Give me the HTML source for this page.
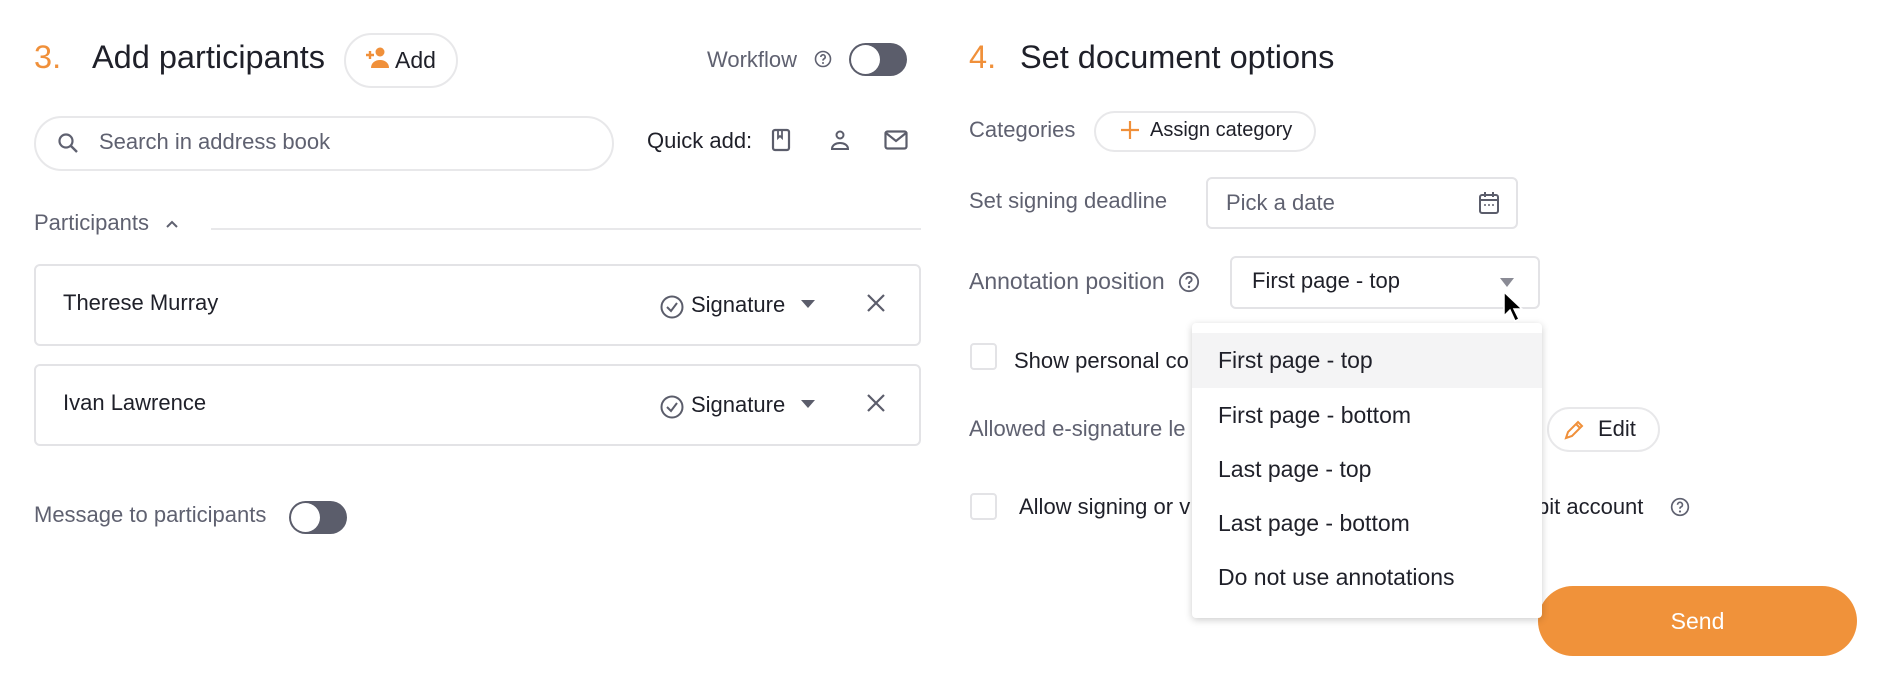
<!DOCTYPE html>
<html><head><meta charset="utf-8"><style>
*{box-sizing:border-box;margin:0;padding:0}
body{width:1888px;height:699px;background:#fff;font-family:"Liberation Sans",Arial,sans-serif;position:relative;overflow:hidden;color:#1f2029}
.a{position:absolute;white-space:nowrap}
.h{font-size:32.5px;color:#1f2029}
.num{color:#f0903a}
.lbl{font-size:22px;color:#5f6170}
.t{font-size:22px;color:#1f2029}
.pill{position:absolute;border:2px solid #e8e8ea;border-radius:30px;background:#fff}
.box{position:absolute;border:2px solid #e3e3e6;border-radius:6px;background:#fff}
.tog{position:absolute;background:#5b5d6b;border-radius:20px}
.tog::after{content:"";position:absolute;left:2px;top:2px;bottom:2px;aspect-ratio:1;border-radius:50%;background:#fff}
.cb{position:absolute;width:27px;height:27px;border:2px solid #e3e3e6;border-radius:4px;background:#fff}
.dd{font-size:23px}
</style></head><body>

<div class="a h" style="left:34px;top:39px"><span class="num">3.</span></div>
<div class="a h" style="left:92px;top:39px">Add participants</div>
<div class="pill" style="left:344px;top:33px;width:114px;height:55px"></div>
<svg class="a" style="left:364px;top:47px" width="26" height="22" viewBox="0 0 26 22"><path d="M2 8h8M6 4v8" stroke="#f0903a" stroke-width="2.4"/><circle cx="16" cy="5" r="4.5" fill="#f0903a"/><path d="M7 21c0-5 4-8 9-8s9 3 9 8z" fill="#f0903a"/></svg>
<div class="a t" style="left:395px;top:47px;font-size:23px">Add</div>

<div class="a lbl" style="left:707px;top:47px">Workflow</div>
<svg class="a" style="left:814px;top:50px" width="18" height="18" viewBox="0 0 18 18"><circle cx="9" cy="9" r="7.5" fill="none" stroke="#5f6170" stroke-width="1.6"/><path d="M6.8 7a2.2 2.2 0 1 1 3 2c-.7.3-.8.8-.8 1.6" fill="none" stroke="#5f6170" stroke-width="1.6"/><circle cx="9" cy="13" r="1" fill="#5f6170"/></svg>
<div class="tog" style="left:849px;top:43px;width:58px;height:33px"></div>

<div class="pill" style="left:34px;top:116px;width:580px;height:55px"></div>
<svg class="a" style="left:56px;top:131px" width="24" height="24" viewBox="0 0 24 24"><circle cx="10" cy="10" r="6.5" fill="none" stroke="#5f6170" stroke-width="2.2"/><path d="M15 15l6 6" stroke="#5f6170" stroke-width="2.4"/></svg>
<div class="a lbl" style="left:99px;top:129px">Search in address book</div>
<div class="a t" style="left:647px;top:128px">Quick add:</div>
<svg class="a" style="left:771px;top:128px" width="20" height="24" viewBox="0 0 20 24"><rect x="2" y="2" width="16" height="20" rx="2" fill="none" stroke="#5b5d6b" stroke-width="2.2"/><path d="M7 2v8l2-2 2 2V2" fill="none" stroke="#5b5d6b" stroke-width="1.8"/></svg>
<svg class="a" style="left:829px;top:129px" width="22" height="22" viewBox="0 0 22 22"><circle cx="11" cy="6" r="3.5" fill="none" stroke="#5b5d6b" stroke-width="2"/><path d="M3 20c0-4 4-6 8-6s8 2 8 6z" fill="none" stroke="#5b5d6b" stroke-width="2"/></svg>
<svg class="a" style="left:884px;top:130px" width="24" height="20" viewBox="0 0 24 20"><rect x="1.5" y="1.5" width="21" height="17" rx="2" fill="none" stroke="#5b5d6b" stroke-width="2.2"/><path d="M2 3l10 8 10-8" fill="none" stroke="#5b5d6b" stroke-width="2.2"/></svg>

<div class="a lbl" style="left:34px;top:210px">Participants</div>
<svg class="a" style="left:165px;top:219px" width="14" height="10" viewBox="0 0 14 10"><path d="M2 8l5-5 5 5" fill="none" stroke="#5f6170" stroke-width="2"/></svg>
<div class="a" style="left:211px;top:228px;width:710px;height:2px;background:#e8e8ea"></div>

<div class="box" style="left:34px;top:264px;width:887px;height:82px"></div>
<div class="a t" style="left:63px;top:290px">Therese Murray</div>
<div class="box" style="left:34px;top:364px;width:887px;height:82px"></div>
<div class="a t" style="left:63px;top:390px">Ivan Lawrence</div>
<svg class="a" style="left:659px;top:294px" width="26" height="26" viewBox="0 0 26 26"><circle cx="13" cy="13" r="10.5" fill="none" stroke="#5b5d6b" stroke-width="2"/><path d="M8 13l4 4 6-8" fill="none" stroke="#5b5d6b" stroke-width="2"/></svg>
<div class="a t" style="left:691px;top:292px">Signature</div>
<svg class="a" style="left:800px;top:299px" width="16" height="10"><path d="M1 1h14l-7 8z" fill="#5b5d6b"/></svg>
<svg class="a" style="left:866px;top:293px" width="20" height="20"><path d="M2 2l16 16M18 2L2 18" stroke="#5b5d6b" stroke-width="2.2"/></svg>
<svg class="a" style="left:659px;top:394px" width="26" height="26" viewBox="0 0 26 26"><circle cx="13" cy="13" r="10.5" fill="none" stroke="#5b5d6b" stroke-width="2"/><path d="M8 13l4 4 6-8" fill="none" stroke="#5b5d6b" stroke-width="2"/></svg>
<div class="a t" style="left:691px;top:392px">Signature</div>
<svg class="a" style="left:800px;top:399px" width="16" height="10"><path d="M1 1h14l-7 8z" fill="#5b5d6b"/></svg>
<svg class="a" style="left:866px;top:393px" width="20" height="20"><path d="M2 2l16 16M18 2L2 18" stroke="#5b5d6b" stroke-width="2.2"/></svg>

<div class="a lbl" style="left:34px;top:502px">Message to participants</div>
<div class="tog" style="left:289px;top:501px;width:58px;height:33px"></div>

<div class="a h" style="left:969px;top:39px"><span class="num">4.</span></div>
<div class="a h" style="left:1020px;top:39px">Set document options</div>

<div class="a lbl" style="left:969px;top:117px">Categories</div>
<div class="pill" style="left:1094px;top:111px;width:222px;height:41px"></div>
<svg class="a" style="left:1120px;top:120px" width="20" height="20"><path d="M10 1v18M1 10h18" stroke="#f0903a" stroke-width="2.2"/></svg>
<div class="a t" style="left:1150px;top:119px;font-size:20px">Assign category</div>

<div class="a lbl" style="left:969px;top:188px">Set signing deadline</div>
<div class="box" style="left:1206px;top:177px;width:312px;height:52px"></div>
<div class="a lbl" style="left:1226px;top:190px">Pick a date</div>
<svg class="a" style="left:1478px;top:191px" width="22" height="24" viewBox="0 0 22 24"><rect x="2" y="4" width="18" height="18" rx="2" fill="none" stroke="#5b5d6b" stroke-width="2"/><path d="M2 9h18M7 1v5M15 1v5" stroke="#5b5d6b" stroke-width="2"/><path d="M6 14h2M10 14h2M14 14h2" stroke="#5b5d6b" stroke-width="1.6"/></svg>

<div class="a lbl" style="left:969px;top:268px;font-size:23px">Annotation position</div>
<svg class="a" style="left:1178px;top:271px" width="22" height="22" viewBox="0 0 18 18"><circle cx="9" cy="9" r="7.5" fill="none" stroke="#5f6170" stroke-width="1.5"/><path d="M6.8 7a2.2 2.2 0 1 1 3 2c-.7.3-.8.8-.8 1.6" fill="none" stroke="#5f6170" stroke-width="1.5"/><circle cx="9" cy="13" r="1" fill="#5f6170"/></svg>
<div class="box" style="left:1230px;top:256px;width:310px;height:53px"></div>
<div class="a t" style="left:1252px;top:268px">First page - top</div>
<svg class="a" style="left:1500px;top:278px" width="14" height="9"><path d="M0 0h14l-7 9z" fill="#8a8b95"/></svg>

<div class="cb" style="left:970px;top:343px"></div>
<div class="a t" style="left:1014px;top:348px">Show personal co</div>
<div class="a lbl" style="left:969px;top:416px">Allowed e-signature le</div>
<div class="pill" style="left:1547px;top:407px;width:113px;height:45px"></div>
<svg class="a" style="left:1562px;top:418px" width="24" height="24" viewBox="0 0 24 24"><path d="M4 20l2-6L16 4l4 4-10 10z" fill="none" stroke="#f0903a" stroke-width="2"/><path d="M14 6l4 4" stroke="#f0903a" stroke-width="2"/></svg>
<div class="a t" style="left:1598px;top:416px">Edit</div>
<div class="cb" style="left:970px;top:493px"></div>
<div class="a t" style="left:1019px;top:494px">Allow signing or v</div>
<div class="a t" style="left:1537px;top:494px">bit account</div>
<svg class="a" style="left:1670px;top:497px" width="20" height="20" viewBox="0 0 18 18"><circle cx="9" cy="9" r="7.5" fill="none" stroke="#5f6170" stroke-width="1.5"/><path d="M6.8 7a2.2 2.2 0 1 1 3 2c-.7.3-.8.8-.8 1.6" fill="none" stroke="#5f6170" stroke-width="1.5"/><circle cx="9" cy="13" r="1" fill="#5f6170"/></svg>

<div class="a" style="left:1538px;top:586px;width:319px;height:70px;background:#f0923a;border-radius:35px;color:#fff;font-size:23px;text-align:center;line-height:70px">Send</div>

<div class="a" style="left:1192px;top:323px;width:350px;height:295px;background:#fff;border-radius:4px;box-shadow:0 2px 8px rgba(0,0,0,.2)">
<div style="position:absolute;left:0;top:10px;width:350px;height:55px;background:#f4f4f5"></div>
<div class="a t dd" style="left:26px;top:24px">First page - top</div>
<div class="a t dd" style="left:26px;top:79px">First page - bottom</div>
<div class="a t dd" style="left:26px;top:133px">Last page - top</div>
<div class="a t dd" style="left:26px;top:187px">Last page - bottom</div>
<div class="a t dd" style="left:26px;top:241px">Do not use annotations</div>
</div>

<svg class="a" style="left:1502px;top:290px" width="22" height="34" viewBox="0 0 22 34"><path d="M2 2v24l6-6 5 11 4-2-5-10h8z" fill="#000" stroke="#fff" stroke-width="1.5"/></svg>
</body></html>
